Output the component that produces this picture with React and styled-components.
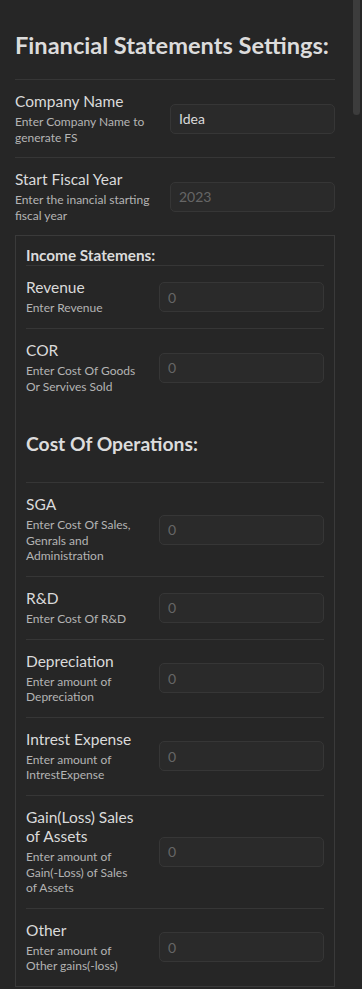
import React from 'react';
import styled, { createGlobalStyle } from 'styled-components';

const GlobalStyle = createGlobalStyle`
  html, body {
    margin: 0;
    padding: 0;
    background: #262626;
    overflow: hidden;
  }
  body {
    font-family: Lato, 'Noto Sans', sans-serif;
    color: #dadada;
  }
`;

const Page = styled.div`
  position: relative;
  height: 989px;
  overflow: hidden;
  padding: 0 27px 0 15px;
`;

const FakeScrollThumb = styled.div`
  position: absolute;
  top: 0;
  right: 2px;
  width: 7px;
  height: 115px;
  background: #3c3c3c;
  border-radius: 0 0 4px 4px;
`;

const Title = styled.h2`
  margin: 0;
  padding: 31px 0 19px;
  font-size: 23.6px;
  line-height: 29px;
  font-weight: 700;
  color: #dcdcdc;
  white-space: nowrap;
`;

const Row = styled.div`
  display: flex;
  align-items: center;
  padding: 12px 0;
  border-top: ${(p) => (p.$noBorder ? 'none' : '1px solid #363636')};
`;

const Info = styled.div`
  flex: 1 1 auto;
  min-width: 0;
  margin-right: 20px;
`;

const Name = styled.div`
  font-size: 15.5px;
  line-height: 19px;
  color: #dadada;
`;

const Description = styled.div`
  margin-top: 3px;
  font-size: 12px;
  line-height: 15.6px;
  color: #b4b4b4;
`;

const Input = styled.input`
  flex: 0 0 165px;
  width: 165px;
  height: 30px;
  box-sizing: border-box;
  padding: 0 8px;
  border: 1px solid #363636;
  border-radius: 5px;
  background: #2a2a2a;
  color: #dadada;
  font-family: inherit;
  font-size: 14px;
  outline: none;

  &::placeholder {
    color: #666666;
  }
`;

const Box = styled.div`
  border: 1px solid #3a3a3a;
  padding: 0 10px;
`;

const BoxHeading = styled.div`
  padding: 10px 0 1px;
  font-size: 15.3px;
  line-height: 18px;
  font-weight: 700;
  color: #dcdcdc;
  border-bottom: 1px solid #363636;
`;

const SectionTitle = styled.h3`
  margin: 27px 0;
  font-size: 19.3px;
  line-height: 22px;
  font-weight: 700;
  color: #dcdcdc;
`;

function Setting({ name, desc, value, placeholder, noBorder }) {
  return (
    <Row $noBorder={noBorder}>
      <Info>
        <Name>{name}</Name>
        <Description>{desc}</Description>
      </Info>
      <Input
        type="text"
        defaultValue={value}
        placeholder={placeholder}
        readOnly
      />
    </Row>
  );
}

const income = [
  { name: 'Revenue', desc: 'Enter Revenue' },
  { name: 'COR', desc: 'Enter Cost Of Goods Or Servives Sold' },
];

const operations = [
  { name: 'SGA', desc: 'Enter Cost Of Sales, Genrals and Administration' },
  { name: 'R&D', desc: 'Enter Cost Of R&D' },
  { name: 'Depreciation', desc: 'Enter amount of Depreciation' },
  { name: 'Intrest Expense', desc: 'Enter amount of IntrestExpense' },
  {
    name: 'Gain(Loss) Sales of Assets',
    desc: 'Enter amount of Gain(-Loss) of Sales of Assets',
  },
  { name: 'Other', desc: 'Enter amount of Other gains(-loss)' },
];

export default function App() {
  return (
    <>
      <GlobalStyle />
      <Page>
        <Title>Financial Statements Settings:</Title>
        <Setting
          name="Company Name"
          desc="Enter Company Name to generate FS"
          value="Idea"
        />
        <Setting
          name="Start Fiscal Year"
          desc="Enter the inancial starting fiscal year"
          placeholder="2023"
        />
        <Box>
          <BoxHeading>Income Statemens:</BoxHeading>
          {income.map((item, i) => (
            <Setting key={item.name} {...item} placeholder="0" noBorder={i === 0} />
          ))}
          <SectionTitle>Cost Of Operations:</SectionTitle>
          {operations.map((item) => (
            <Setting key={item.name} {...item} placeholder="0" />
          ))}
        </Box>
        <FakeScrollThumb />
      </Page>
    </>
  );
}
